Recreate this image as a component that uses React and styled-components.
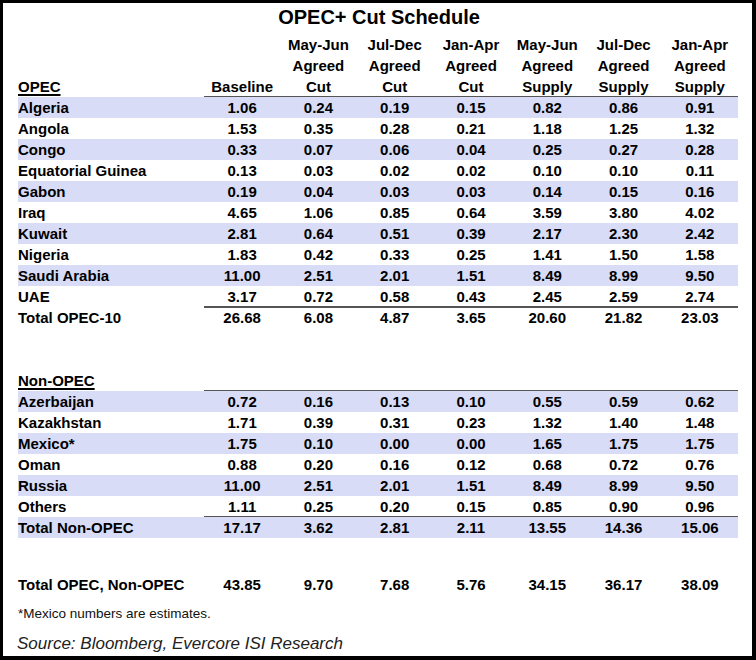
import React from 'react';
import styled, { createGlobalStyle } from 'styled-components';

const opec = [
	['Algeria', '1.06', '0.24', '0.19', '0.15', '0.82', '0.86', '0.91'],
	['Angola', '1.53', '0.35', '0.28', '0.21', '1.18', '1.25', '1.32'],
	['Congo', '0.33', '0.07', '0.06', '0.04', '0.25', '0.27', '0.28'],
	['Equatorial Guinea', '0.13', '0.03', '0.02', '0.02', '0.10', '0.10', '0.11'],
	['Gabon', '0.19', '0.04', '0.03', '0.03', '0.14', '0.15', '0.16'],
	['Iraq', '4.65', '1.06', '0.85', '0.64', '3.59', '3.80', '4.02'],
	['Kuwait', '2.81', '0.64', '0.51', '0.39', '2.17', '2.30', '2.42'],
	['Nigeria', '1.83', '0.42', '0.33', '0.25', '1.41', '1.50', '1.58'],
	['Saudi Arabia', '11.00', '2.51', '2.01', '1.51', '8.49', '8.99', '9.50'],
	['UAE', '3.17', '0.72', '0.58', '0.43', '2.45', '2.59', '2.74']
];

const nonOpec = [
	['Azerbaijan', '0.72', '0.16', '0.13', '0.10', '0.55', '0.59', '0.62'],
	['Kazakhstan', '1.71', '0.39', '0.31', '0.23', '1.32', '1.40', '1.48'],
	['Mexico*', '1.75', '0.10', '0.00', '0.00', '1.65', '1.75', '1.75'],
	['Oman', '0.88', '0.20', '0.16', '0.12', '0.68', '0.72', '0.76'],
	['Russia', '11.00', '2.51', '2.01', '1.51', '8.49', '8.99', '9.50'],
	['Others', '1.11', '0.25', '0.20', '0.15', '0.85', '0.90', '0.96']
];

const totalOpec = ['Total OPEC-10', '26.68', '6.08', '4.87', '3.65', '20.60', '21.82', '23.03'];
const totalNonOpec = ['Total Non-OPEC', '17.17', '3.62', '2.81', '2.11', '13.55', '14.36', '15.06'];
const grandTotal = ['Total OPEC, Non-OPEC', '43.85', '9.70', '7.68', '5.76', '34.15', '36.17', '38.09'];

const headTop = ['', '', 'May-Jun', 'Jul-Dec', 'Jan-Apr', 'May-Jun', 'Jul-Dec', 'Jan-Apr'];
const headMid = ['', '', 'Agreed', 'Agreed', 'Agreed', 'Agreed', 'Agreed', 'Agreed'];
const headBottom = ['Baseline', 'Cut', 'Cut', 'Cut', 'Supply', 'Supply', 'Supply'];

const GlobalStyle = createGlobalStyle`
	html, body {
		margin: 0;
		padding: 0;
		background: #000;
	}
	body {
		font-family: "Liberation Sans", Arial, sans-serif;
	}
`;

const DataRow = ({ cells, shaded, rule }) => (
	<Row $shaded={shaded} $rule={rule}>
		{cells.map((c, i) => (i === 0 ? <Label key={i}>{c}</Label> : <Num key={i}>{c}</Num>))}
	</Row>
);

const App = () => {
	return (
		<Panel>
			<GlobalStyle />
			<Title>OPEC+ Cut Schedule</Title>
			<Table>
				<Row>
					{headTop.map((c, i) => (i === 0 ? <Label key={i} /> : <Num key={i}>{c}</Num>))}
				</Row>
				<Row>
					{headMid.map((c, i) => (i === 0 ? <Label key={i} /> : <Num key={i}>{c}</Num>))}
				</Row>
				<Row $rule>
					<Label>
						<Section>OPEC</Section>
					</Label>
					{headBottom.map((c, i) => (
						<Num key={i}>{c}</Num>
					))}
				</Row>
				{opec.map((r, i) => (
					<DataRow key={r[0]} cells={r} shaded={i % 2 === 0} rule={i === opec.length - 1} />
				))}
				<DataRow cells={totalOpec} />
				<Blank />
				<Blank />
				<Row $rule>
					<Label>
						<Section>Non-OPEC</Section>
					</Label>
				</Row>
				{nonOpec.map((r, i) => (
					<DataRow key={r[0]} cells={r} shaded={i % 2 === 0} rule={i === nonOpec.length - 1} />
				))}
				<DataRow cells={totalNonOpec} shaded />
				<Gap />
				<DataRow cells={grandTotal} />
			</Table>
			<Footnote>*Mexico numbers are estimates.</Footnote>
			<Source>Source: Bloomberg, Evercore ISI Research</Source>
		</Panel>
	);
};

const Panel = styled.div`
	box-sizing: border-box;
	margin: 3px 4px 4px 3px;
	height: 653px;
	background: #fff;
	padding: 0 14px 0 15px;
	color: #000;
`;

const Title = styled.div`
	height: 31px;
	padding-top: 1px;
	box-sizing: border-box;
	line-height: 26px;
	font-size: 20px;
	font-weight: bold;
	text-align: center;
	padding-left: 2px;
`;

const Table = styled.div`
	width: 720px;
	display: flex;
	flex-direction: column;
`;

const Row = styled.div`
	display: grid;
	grid-template-columns: 186px repeat(7, 1fr);
	height: 21px;
	line-height: 21px;
	font-size: 15px;
	font-weight: bold;
	background: ${(p) => (p.$shaded ? '#d8dcf7' : 'transparent')};
	position: relative;
	&::after {
		content: '';
		display: ${(p) => (p.$rule ? 'block' : 'none')};
		position: absolute;
		left: 186px;
		right: 0;
		bottom: -1px;
		height: 2px;
		background: #555;
	}
`;

const Label = styled.span`
	white-space: nowrap;
`;

const Num = styled.span`
	text-align: center;
	white-space: nowrap;
`;

const Section = styled.span`
	text-decoration: underline;
	text-decoration-thickness: 1.5px;
	text-underline-offset: 2px;
`;

const Blank = styled.div`
	height: 21px;
`;

const Gap = styled.div`
	height: 36px;
`;

const Footnote = styled.div`
	margin-top: 9px;
	font-size: 13.5px;
	line-height: 20px;
	color: #111;
`;

const Source = styled.div`
	margin-top: 9px;
	font-size: 17px;
	font-style: italic;
	line-height: 22px;
	color: #222;
	margin-left: -1px;
`;

export default App;
